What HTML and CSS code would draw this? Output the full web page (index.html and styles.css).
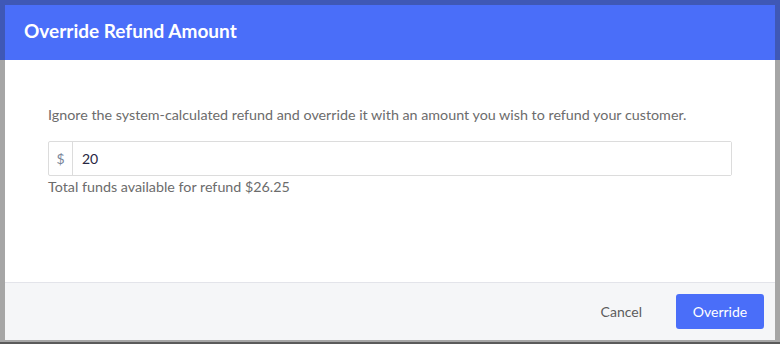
FILE: index.html
```html
<html>
<head>
	<title>Override Refund Amount</title>
	<link rel="stylesheet" href="styles.css">
</head>
<body>
	<div class="backdrop">
		<div class="modal">
			<div class="modal-header">Override Refund Amount</div>
			<div class="modal-body">
				<p class="intro">Ignore the system-calculated refund and override it with an amount you wish to refund your customer.</p>
				<div class="amount-field">
					<span class="prefix">$</span>
					<input type="text" class="amount" value="20">
				</div>
				<p class="hint">Total funds available for refund $26.25</p>
			</div>
			<div class="modal-footer">
				<button type="button" class="btn-link">Cancel</button>
				<button type="button" class="btn-primary">Override</button>
			</div>
		</div>
	</div>
</body>
</html>
```

FILE: styles.css
```css
body { margin: 0; font-family: Lato, "Open Sans", sans-serif; background: #a6a6a6; }
.backdrop { height: 344px; box-sizing: border-box; padding: 5px 5px 4px 5px; background: linear-gradient(#3f58b6 0, #3f58b6 60px, #a6a6a6 60px); border-bottom: 2px solid #5a5a5a; }
.modal { background: #fff; display: flex; flex-direction: column; height: 335px; }
.modal-header { background: #4a6ef9; color: #fff; font-weight: bold; font-size: 19px; height: 55px; line-height: 52px; padding: 0 19px; }
.modal-body { flex: 1; padding: 46px 43px 0 43px; }
.intro { margin: 0 0 18px 0; font-size: 14.3px; color: #6c6c6c; }
.amount-field { display: flex; height: 35px; border: 1px solid #dcdcdc; border-radius: 2px; box-sizing: border-box; }
.prefix { width: 23px; border-right: 1px solid #dcdcdc; color: #7a869a; font-size: 14px; display: flex; align-items: center; justify-content: center; }
.amount { flex: 1; border: 0; outline: none; padding: 0 9px; font-family: inherit; font-size: 14px; color: #262642; }
.hint { margin: 2px 0 0 0; font-size: 14.3px; color: #6c6c6c; }
.modal-footer { background: #f5f6f8; border-top: 1px solid #e3e4ea; height: 57px; display: flex; align-items: center; justify-content: flex-end; padding-right: 11px; gap: 12px; }
.btn-link { background: none; border: 0; font-family: inherit; font-size: 14px; color: #5c5c5c; padding: 0 22px; height: 35px; }
.btn-primary { background: #4a6ef9; color: #fff; border: 0; border-radius: 3px; font-family: inherit; font-size: 14px; width: 88px; height: 35px; }
```
